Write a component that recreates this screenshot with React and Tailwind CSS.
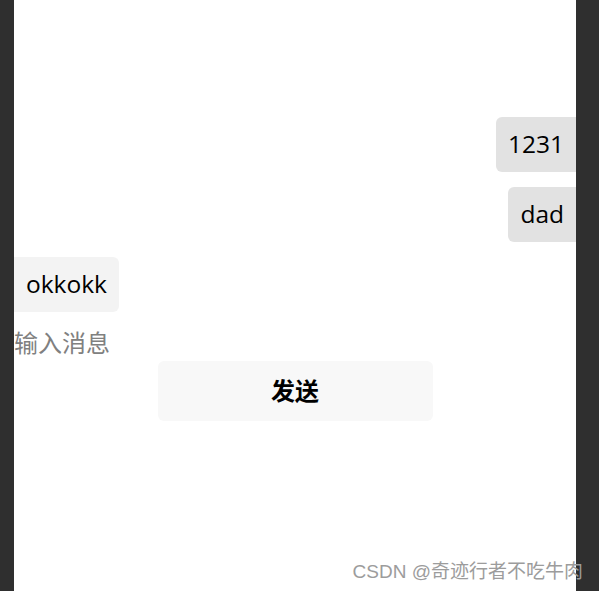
import React, { useState } from "react";

const messages = [
  { id: 1, text: "1231", mine: true },
  { id: 2, text: "dad", mine: true },
  { id: 3, text: "okkokk", mine: false },
];

const App = () => {
  const [value, setValue] = useState("");

  return (
    <div
      className="relative flex h-screen w-full bg-[#2f2f2f]"
      style={{ fontFamily: '"Open Sans", "Noto Sans CJK SC", sans-serif' }}
    >
      <div className="w-[14px] shrink-0" />
      <main className="flex w-[562px] shrink-0 flex-col bg-white pt-[117px]">
        {/* 消息列表 */}
        <div className="flex flex-col gap-[15px]">
          {messages.map((m) => (
            <div key={m.id} className={m.mine ? "flex justify-end" : "flex justify-start"}>
              <div
                className={
                  m.mine
                    ? "flex h-[55px] items-center rounded-l-[6px] bg-[#e2e2e2] px-[12px] text-[24.5px] text-black"
                    : "flex h-[55px] items-center rounded-r-[6px] bg-[#f3f3f3] px-[12px] text-[24.5px] text-black"
                }
              >
                {m.text}
              </div>
            </div>
          ))}
        </div>

        {/* 输入框 */}
        <input
          value={value}
          onChange={(e) => setValue(e.target.value)}
          placeholder="输入消息"
          className="mt-[11px] h-[38px] w-full bg-transparent text-[24px] outline-none placeholder:text-[#808080]"
        />
        <div className="flex justify-center">
          <button className="h-[60px] w-[275px] rounded-[6px] bg-[#f8f8f8] text-[24px] font-bold text-black">
            发送
          </button>
        </div>
      </main>
      <div className="flex-1" />

      <span
        className="absolute bottom-[5px] right-[16px] text-[19px] text-[#9c9c9c]"
        style={{ fontFamily: '"Liberation Sans", "Noto Sans CJK SC", sans-serif' }}
      >
        CSDN @奇迹行者不吃牛肉
      </span>
    </div>
  );
};

export default App;
